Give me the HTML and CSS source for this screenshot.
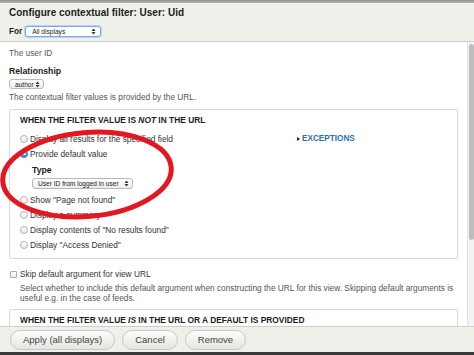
FILE: index.html
```html
<!DOCTYPE html>
<html>
<head>
<meta charset="utf-8">
<link rel="stylesheet" href="styles.css">
</head>
<body>
<div class="dialog">
  <div class="topstrip"></div>
  <header class="header">
    <h1 class="title">Configure contextual filter: User: Uid</h1>
    <div class="for-row">
      <span class="for-label">For</span>
      <div class="select select-focus select-displays"><span class="select-text">All displays</span><svg class="arrows" width="5" height="7" viewBox="0 0 5 7"><path d="M0.5 3 L2.5 0.6 L4.5 3Z M0.5 4 L2.5 6.4 L4.5 4Z" fill="#333"/></svg></div>
    </div>
  </header>
  <div class="main">
    <div class="content">
      <p class="desc first">The user ID</p>
      <div class="label">Relationship</div>
      <div class="select select-author"><span class="select-text">author</span><svg class="arrows" width="5" height="7" viewBox="0 0 5 7"><path d="M0.5 3 L2.5 0.6 L4.5 3Z M0.5 4 L2.5 6.4 L4.5 4Z" fill="#333"/></svg></div>
      <p class="desc">The contextual filter values is provided by the URL.</p>

      <div class="box">
        <div class="legend">WHEN THE FILTER VALUE IS <em>NOT</em> IN THE URL</div>
        <div class="box-cols">
          <div class="col-left">
            <div class="radio-row"><span class="radio"></span>Display all results for the specified field</div>
            <div class="radio-row"><span class="radio checked"></span>Provide default value</div>
            <div class="type-block">
              <div class="label type-label">Type</div>
              <div class="select select-type"><span class="select-text">User ID from logged in user</span><svg class="arrows" width="5" height="7" viewBox="0 0 5 7"><path d="M0.5 3 L2.5 0.6 L4.5 3Z M0.5 4 L2.5 6.4 L4.5 4Z" fill="#333"/></svg></div>
            </div>
            <div class="radio-row after-type"><span class="radio"></span>Show "Page not found"</div>
            <div class="radio-row"><span class="radio"></span>Display a summary</div>
            <div class="radio-row"><span class="radio"></span>Display contents of "No results found"</div>
            <div class="radio-row"><span class="radio"></span>Display "Access Denied"</div>
          </div>
          <div class="col-right">
            <div class="exceptions"><span class="tri"></span><span class="exc-text">EXCEPTIONS</span></div>
          </div>
        </div>
      </div>

      <div class="check-row"><span class="checkbox"></span>Skip default argument for view URL</div>
      <p class="desc desc-indent"><span class="line">Select whether to include this default argument when constructing the URL for this view. Skipping default arguments is</span><span class="line">useful e.g. in the case of feeds.</span></p>

      <div class="box box2">
        <div class="legend">WHEN THE FILTER VALUE <em>IS</em> IN THE URL OR A DEFAULT IS PROVIDED</div>
      </div>
    </div>
    <div class="scrollbar"><div class="thumb"></div></div>
  </div>
  <footer class="buttons">
    <span class="button">Apply (all displays)</span>
    <span class="button">Cancel</span>
    <span class="button">Remove</span>
  </footer>
  <div class="bottomstrip"></div>
</div>
<svg class="annotation" width="474" height="355" viewBox="0 0 474 355">
  <ellipse cx="87" cy="174.5" rx="84.5" ry="42" transform="rotate(-5 87 174.5)" fill="none" stroke="#e3171f" stroke-width="5"/>
</svg>
</body>
</html>
```
FILE: styles.css
```css
* { box-sizing: border-box; margin: 0; padding: 0; }
body {
  width: 474px;
  height: 355px;
  overflow: hidden;
  position: relative;
  font-family: "Liberation Sans", Arial, sans-serif;
  color: #333;
  background: #fff;
}
.dialog { display: flex; flex-direction: column; height: 355px; }
.topstrip { height: 3px; background: linear-gradient(#8e8e8a, #b8b8b4); }
.header {
  height: 39px;
  background: #f0f0eb;
  border-bottom: 1px solid #cfcfca;
  padding: 3px 9px 0;
}
.title { font-size: 10px; font-weight: bold; line-height: 14px; color: #1c1c1c; }
.for-row { display: flex; align-items: center; margin-top: 6px; height: 11px; }
.for-label { font-size: 8.2px; font-weight: bold; color: #1c1c1c; margin-right: 3px; }

.select {
  display: flex;
  align-items: center;
  justify-content: space-between;
  border: 1px solid #b9b9b9;
  border-radius: 3px;
  background: linear-gradient(#ffffff, #ececec);
  font-size: 6.6px;
  color: #222;
  padding: 0 3px 0 5px;
  white-space: nowrap;
}
.select-text { white-space: nowrap; }
.select-focus { border-color: #7fa9df; box-shadow: 0 0 0 1px #b8d2f2; background: #fff; }
.select-displays { width: 76px; height: 11px; padding-left: 6px; padding-right: 4px; }
.select-author { width: 35px; height: 10px; margin-top: 2px; }
.select-type { width: 101px; height: 11px; margin-top: 2px; }
.arrows { flex: none; }

.main { display: flex; height: 284px; overflow: hidden; }
.content { flex: 1; padding: 0 9px; overflow: hidden; }
.scrollbar { width: 7px; background: #f3f3f3; border-left: 1px solid #e2e2e2; padding-top: 2px; }
.thumb { width: 5px; margin-left: 1px; height: 196px; border-radius: 3px; background: #bdbdbd; }

.desc { font-size: 8.3px; line-height: 10px; color: #555; }
.desc.first { margin-top: 6px; }
.label { font-size: 8.7px; font-weight: bold; line-height: 12px; margin-top: 7px; color: #1c1c1c; }
.select-author + .desc { margin-top: 3px; }

.box {
  margin-top: 7px;
  border: 1px solid #d8d8d8;
  border-radius: 2px;
  padding: 4px 10px 6px;
}
.legend { font-size: 8.4px; font-weight: bold; line-height: 12px; color: #1c1c1c; }
.box-cols { display: flex; margin-top: 5px; }
.col-left { width: 277px; }
.radio-row { display: flex; align-items: center; height: 15px; font-size: 8.3px; color: #333; white-space: nowrap; }
.radio {
  width: 8px; height: 8px; border-radius: 50%;
  border: 1px solid #b3b3b3;
  background: linear-gradient(#ffffff, #e9e9e9);
  margin-right: 2px;
  flex: none;
  display: flex; align-items: center; justify-content: center;
}
.radio.checked { background: #3d8ff0; border-color: #2f78d6; }
.radio.checked::after { content: ""; width: 3px; height: 3px; border-radius: 50%; background: #fff; }
.type-block { padding-left: 12px; }
.type-label { margin-top: 3px; }
.after-type { margin-top: 3px; }
.exceptions { display: flex; align-items: center; height: 15px; }
.tri { width: 0; height: 0; border-left: 3px solid #222; border-top: 2px solid transparent; border-bottom: 2px solid transparent; margin-right: 2px; }
.exc-text { font-size: 8.2px; font-weight: bold; color: #2d6fae; }

.check-row { display: flex; align-items: center; margin-top: 9px; height: 12px; font-size: 8.3px; color: #333; }
.checkbox { width: 7px; height: 7px; border: 1px solid #adadad; border-radius: 1px; background: linear-gradient(#fff, #ececec); margin-left: 1px; margin-right: 3px; }
.desc-indent { margin-top: 3px; padding-left: 11px; }
.line { display: block; white-space: nowrap; }
.box2 { margin-top: 6px; padding-bottom: 20px; }

.buttons {
  height: 26px;
  background: #f0f0eb;
  border-top: 1px solid #cfcfca;
  display: flex;
  align-items: center;
  padding-left: 10px;
  gap: 7px;
}
.button {
  height: 20px;
  padding: 0 12px;
  border-radius: 10px;
  border: 1px solid #c9c9c4;
  background: linear-gradient(#fdfdfc, #e4e4e0);
  font-size: 9.5px;
  color: #444;
  display: flex;
  align-items: center;
}
.bottomstrip { height: 3px; background: #3a3a3a; }
.annotation { position: absolute; left: 0; top: 0; pointer-events: none; }
```
